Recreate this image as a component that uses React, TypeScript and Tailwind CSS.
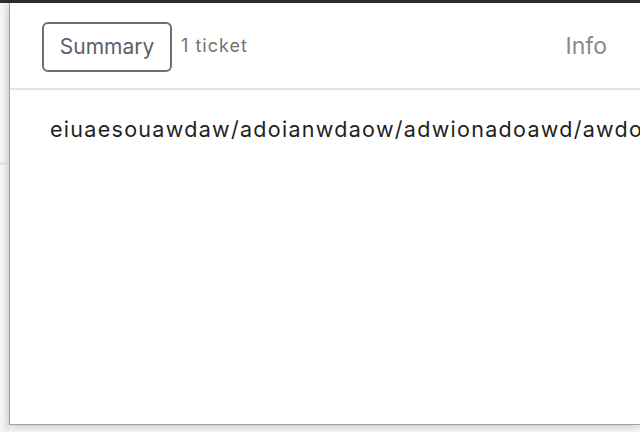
export default function App() {
  return (
    <div className="relative flex h-[432px] w-[640px] flex-col overflow-hidden bg-[#fafafa] font-['Inter','Noto_Sans',sans-serif]">
      {/* top dark bar */}
      <div className="h-[3px] w-full shrink-0 bg-[#2b2d2f]" />

      <div className="flex flex-1">
        {/* strip of the page behind the panel */}
        <div className="w-[9px] shrink-0 bg-gradient-to-r from-[#f7f7f7] to-[#ebebeb]">
          <div className="mt-[159px] h-[3px] bg-[#e4e4e8]" />
        </div>

        {/* panel */}
        <div className="flex h-[422px] min-w-0 flex-1 flex-col border-b border-l border-[#a3a3a3] bg-white shadow-[0_3px_8px_rgba(0,0,0,0.18)]">
          <header className="flex h-[87px] shrink-0 items-center border-b-2 border-[#e2e4e7] pt-[3px] pl-[32px] pr-[32px]">
            <button className="flex h-[50px] w-[130px] items-center justify-center rounded-[6px] border-2 border-[#6b6f76] text-[21px] text-[#5c6068]">
              Summary
            </button>
            <span className="ml-[9px] -mt-[4px] text-[18px] tracking-[1px] text-[#737373]">1 ticket</span>
            <span className="ml-auto mr-[1px] -mt-[2px] text-[23px] text-[#8a8a8a]">Info</span>
          </header>
          <div className="overflow-hidden whitespace-nowrap pl-[40px] pt-[24px] text-[21.5px] leading-[30px] tracking-[0.06em] text-[#1f1f1f]">
            eiuaesouawdaw/adoianwdaow/adwionadoawd/awdoiawndoawd/adwoiandw
          </div>
        </div>
      </div>
    </div>
  )
}
